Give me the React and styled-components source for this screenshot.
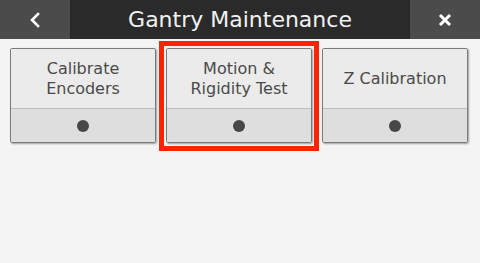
import React from "react";
import styled, { createGlobalStyle, css } from "styled-components";

const GlobalStyle = createGlobalStyle`
  html, body {
    margin: 0;
    padding: 0;
    background: #f4f4f4;
    font-family: "DejaVu Sans", sans-serif;
  }
`;

const items = [
  { id: "enc", label: ["Calibrate", "Encoders"] },
  { id: "motion", label: ["Motion &", "Rigidity Test"], selected: true },
  { id: "z", label: ["Z Calibration"] },
];

function App() {
  return (
    <Page>
      <GlobalStyle />
      <Header>
        <NavButton aria-label="Back">
          <svg width="14" height="16" viewBox="0 0 14 16">
            <path d="M10 2 L4 8 L10 14" fill="none" stroke="#fff" strokeWidth="2.6" strokeLinecap="square" />
          </svg>
        </NavButton>
        <Title>Gantry Maintenance</Title>
        <NavButton aria-label="Close">
          <svg width="14" height="14" viewBox="0 0 14 14">
            <path d="M2 2 L12 12 M12 2 L2 12" fill="none" stroke="#fff" strokeWidth="3" />
          </svg>
        </NavButton>
      </Header>
      <Grid>
        {items.map(item => (
          <Card key={item.id} $selected={item.selected}>
            <CardLabel>
              {item.label.map(line => <span key={line}>{line}</span>)}
            </CardLabel>
            <CardStatus>
              <Dot />
            </CardStatus>
          </Card>
        ))}
      </Grid>
    </Page>
  );
}

const Page = styled.div`
  width: 480px;
  height: 263px;
  background: #f4f4f4;
`;

const Header = styled.div`
  display: flex;
  height: 39px;
  background: #2a2a2a;
`;

const NavButton = styled.button`
  width: 70px;
  height: 39px;
  border: none;
  padding: 0;
  background: #4b4b4b;
  display: flex;
  align-items: center;
  justify-content: center;
`;

const Title = styled.div`
  flex: 1;
  display: flex;
  align-items: center;
  justify-content: center;
  color: #f2f2f2;
  font-size: 22px;
  padding-bottom: 1px;
`;

const Grid = styled.div`
  display: grid;
  grid-template-columns: repeat(3, 1fr);
  gap: 10px;
  padding: 9px 12px 0 10px;
`;

const Card = styled.div`
  position: relative;
  height: 95px;
  box-sizing: border-box;
  border: 1px solid #7a7a7a;
  border-radius: 2px;
  display: flex;
  flex-direction: column;
  box-shadow: 1px 1px 2px rgba(0, 0, 0, 0.35);
  ${p => p.$selected && css`
    &::after {
      content: "";
      position: absolute;
      inset: -8px -8px -9px -8px;
      border: 5px solid #ff2200;
      pointer-events: none;
    }
  `}
`;

const CardLabel = styled.div`
  height: 59px;
  background: #ebebeb;
  border-bottom: 1px solid #bdbdbd;
  display: flex;
  flex-direction: column;
  align-items: center;
  justify-content: center;
  color: #4a4a4a;
  font-size: 16px;
  line-height: 20px;
  border-radius: 1px 1px 0 0;
`;

const CardStatus = styled.div`
  flex: 1;
  background: #dedede;
  display: flex;
  align-items: center;
  justify-content: center;
`;

const Dot = styled.div`
  width: 12px;
  height: 12px;
  border-radius: 50%;
  background: #474747;
`;

export default App;
